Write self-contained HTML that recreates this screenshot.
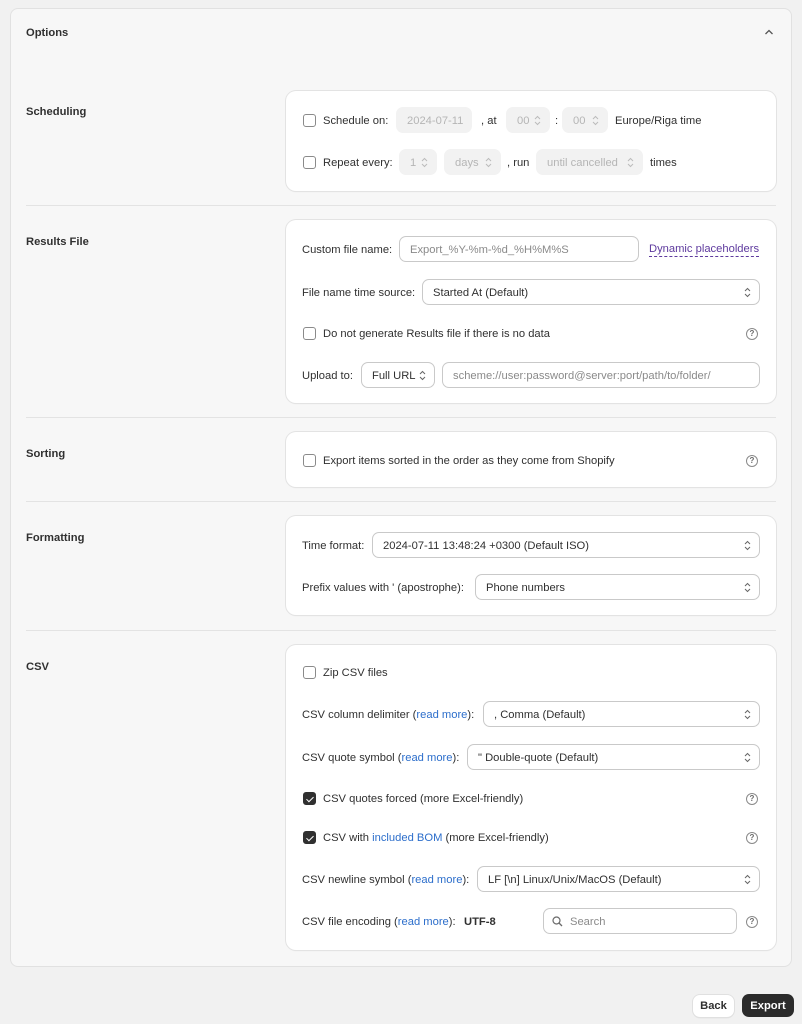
<!DOCTYPE html>
<html><head><meta charset="utf-8"><style>
*{box-sizing:border-box;margin:0;padding:0}
body{width:802px;height:1024px;background:#f1f1f1;font-family:"Liberation Sans",sans-serif;font-size:11.2px;color:#303030;position:relative;overflow:hidden}
.abs{position:absolute}
.panel{left:10px;top:8px;width:782px;height:959px;background:#f7f7f7;border:1px solid #e1e1e1;border-radius:8px}
.card{left:286px;width:490px;background:#fff;border-radius:10px;box-shadow:0 0 0 1px #e3e3e3,0 1px 1px rgba(0,0,0,.08)}
.hr{left:26px;width:750px;height:1px;background:#e3e3e3}
.t{position:absolute;white-space:nowrap;line-height:14px;transform:translateY(-6px)}
.cb{position:absolute;width:13px;height:13px;border:1px solid #8a8a8a;border-radius:3px;left:303px;transform:translateY(-6px);background:#fff}
.cb.on{background:#303030;border-color:#303030}
.cb.on:after{content:"";position:absolute;left:4px;top:1.5px;width:3px;height:6px;border:solid #fff;border-width:0 1.5px 1.5px 0;transform:rotate(45deg)}
.box{position:absolute;border:1px solid #c9c9c9;border-radius:7px;background:#fff;height:26px;line-height:26px;padding-left:10px;white-space:nowrap;overflow:hidden}
.dis{background:#f2f2f2;border-color:#f2f2f2;color:#b5b5b5}
.ar{position:absolute;right:8px;top:7px;width:7px;height:11px;color:#666}
.dis .ar{color:#bbb}
.q{position:absolute;left:746px;width:12px;height:12px;border:1px solid #8a8a8a;border-radius:50%;transform:translateY(-5px);font-size:8px;line-height:10px;text-align:center;color:#6a6a6a;font-weight:bold}
a{color:#2c6ecb;text-decoration:none}
</style></head><body>
<svg width="0" height="0" style="position:absolute"><defs>
<symbol id="ud" viewBox="0 0 7 11"><path d="M1 4 L3.5 1.5 L6 4 M1 7 L3.5 9.5 L6 7" fill="none" stroke="currentColor" stroke-width="1"/></symbol>
</defs></svg>
<div class="abs panel"></div>
<div class="t" style="left:26px;top:32px;font-weight:bold">Options</div>
<svg class="abs" style="left:764px;top:28px" width="10" height="8"><path d="M1.5 6 L5 2.5 L8.5 6" fill="none" stroke="#555" stroke-width="1.3"/></svg>

<div class="t" style="left:26px;top:111px;font-weight:bold">Scheduling</div>
<div class="t" style="left:26px;top:241px;font-weight:bold">Results File</div>
<div class="t" style="left:26px;top:453px;font-weight:bold">Sorting</div>
<div class="t" style="left:26px;top:537px;font-weight:bold">Formatting</div>
<div class="t" style="left:26px;top:666px;font-weight:bold">CSV</div>
<div class="abs hr" style="top:205px"></div>
<div class="abs hr" style="top:417px"></div>
<div class="abs hr" style="top:501px"></div>
<div class="abs hr" style="top:630px"></div>

<div class="abs card" style="top:91px;height:100px"></div>
<div class="abs card" style="top:220px;height:183px"></div>
<div class="abs card" style="top:432px;height:55px"></div>
<div class="abs card" style="top:516px;height:99px"></div>
<div class="abs card" style="top:645px;height:305px"></div>

<div class="cb" style="top:120px"></div>
<div class="t" style="left:323px;top:120px">Schedule on:</div>
<div class="box dis" style="left:396px;top:107px;width:76px">2024-07-11</div>
<div class="t" style="left:481px;top:120px">, at</div>
<div class="box dis" style="left:506px;top:107px;width:44px">00<svg class="ar"><use href="#ud"/></svg></div>
<div class="t" style="left:555px;top:120px">:</div>
<div class="box dis" style="left:562px;top:107px;width:46px">00<svg class="ar"><use href="#ud"/></svg></div>
<div class="t" style="left:615px;top:120px">Europe/Riga time</div>
<div class="cb" style="top:162px"></div>
<div class="t" style="left:323px;top:162px">Repeat every:</div>
<div class="box dis" style="left:399px;top:149px;width:38px">1<svg class="ar"><use href="#ud"/></svg></div>
<div class="box dis" style="left:444px;top:149px;width:57px">days<svg class="ar"><use href="#ud"/></svg></div>
<div class="t" style="left:507px;top:162px">, run</div>
<div class="box dis" style="left:536px;top:149px;width:107px">until cancelled<svg class="ar"><use href="#ud"/></svg></div>
<div class="t" style="left:650px;top:162px">times</div>

<div class="t" style="left:302px;top:249px">Custom file name:</div>
<div class="box" style="left:399px;top:236px;width:240px;color:#8a8a8a">Export_%Y-%m-%d_%H%M%S</div>
<div class="t" style="left:649px;top:249px;color:#5e3a9e;border-bottom:1px dashed #5e3a9e;line-height:13px">Dynamic placeholders</div>
<div class="t" style="left:302px;top:292px">File name time source:</div>
<div class="box" style="left:422px;top:279px;width:338px">Started At (Default)<svg class="ar"><use href="#ud"/></svg></div>
<div class="cb" style="top:333px"></div>
<div class="t" style="left:323px;top:333px">Do not generate Results file if there is no data</div>
<div class="q" style="top:333px">?</div>
<div class="t" style="left:302px;top:375px">Upload to:</div>
<div class="box" style="left:361px;top:362px;width:74px">Full URL<svg class="ar"><use href="#ud"/></svg></div>
<div class="box" style="left:442px;top:362px;width:318px;color:#8a8a8a">scheme://user:password@server:port/path/to/folder/</div>

<div class="cb" style="top:460px"></div>
<div class="t" style="left:323px;top:460px">Export items sorted in the order as they come from Shopify</div>
<div class="q" style="top:460px">?</div>

<div class="t" style="left:302px;top:545px">Time format:</div>
<div class="box" style="left:372px;top:532px;width:388px">2024-07-11 13:48:24 +0300 (Default ISO)<svg class="ar"><use href="#ud"/></svg></div>
<div class="t" style="left:302px;top:587px">Prefix values with ' (apostrophe):</div>
<div class="box" style="left:475px;top:574px;width:285px">Phone numbers<svg class="ar"><use href="#ud"/></svg></div>

<div class="cb" style="top:672px"></div>
<div class="t" style="left:323px;top:672px">Zip CSV files</div>
<div class="t" style="left:302px;top:714px">CSV column delimiter (<a>read more</a>):</div>
<div class="box" style="left:483px;top:701px;width:277px">, Comma (Default)<svg class="ar"><use href="#ud"/></svg></div>
<div class="t" style="left:302px;top:757px">CSV quote symbol (<a>read more</a>):</div>
<div class="box" style="left:467px;top:744px;width:293px">" Double-quote (Default)<svg class="ar"><use href="#ud"/></svg></div>
<div class="cb on" style="top:798px"></div>
<div class="t" style="left:323px;top:798px">CSV quotes forced (more Excel-friendly)</div>
<div class="q" style="top:798px">?</div>
<div class="cb on" style="top:837px"></div>
<div class="t" style="left:323px;top:837px">CSV with <a>included BOM</a> (more Excel-friendly)</div>
<div class="q" style="top:837px">?</div>
<div class="t" style="left:302px;top:879px">CSV newline symbol (<a>read more</a>):</div>
<div class="box" style="left:477px;top:866px;width:283px">LF [\n] Linux/Unix/MacOS (Default)<svg class="ar"><use href="#ud"/></svg></div>
<div class="t" style="left:302px;top:921px">CSV file encoding (<a>read more</a>):</div>
<div class="t" style="left:464px;top:921px;font-weight:bold">UTF-8</div>
<div class="box" style="left:543px;top:908px;width:194px;padding-left:26px;color:#8a8a8a">Search</div>
<svg class="abs" style="left:552px;top:916px" width="11" height="11"><circle cx="4.5" cy="4.5" r="3.5" fill="none" stroke="#6a6a6a" stroke-width="1.2"/><path d="M7 7 L10 10" stroke="#6a6a6a" stroke-width="1.3"/></svg>
<div class="q" style="top:921px">?</div>

<div class="abs" style="left:693px;top:995px;width:41px;height:22px;background:#fff;border-radius:7px;box-shadow:0 0 0 1px #e0e0e0,0 1px 1px rgba(0,0,0,.15);text-align:center;line-height:22px;font-weight:bold;color:#303030">Back</div>
<div class="abs" style="left:742px;top:994px;width:52px;height:23px;background:#2b2b2b;border-radius:7px;text-align:center;line-height:24px;font-weight:bold;color:#fff">Export</div>
</body></html>
